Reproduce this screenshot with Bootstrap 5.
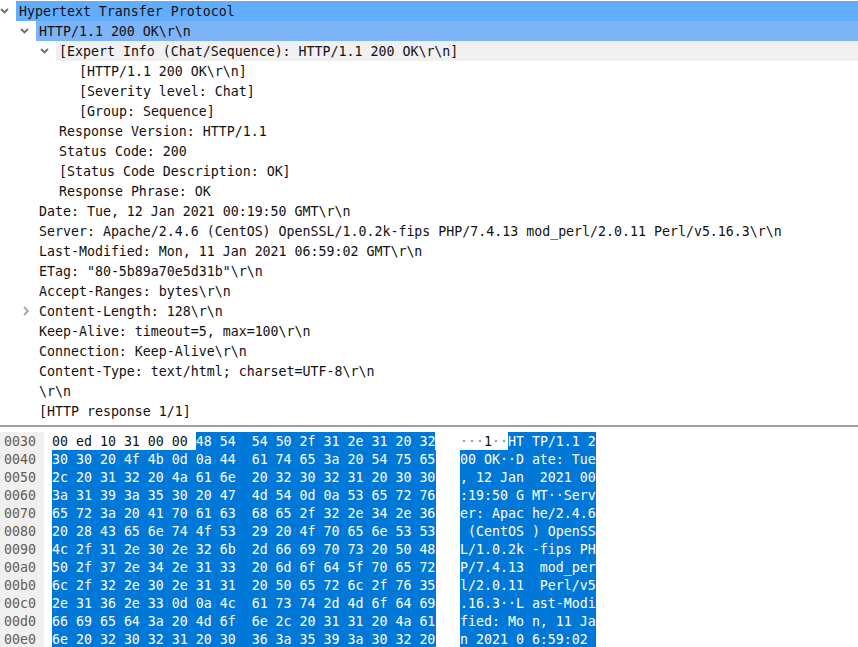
<!doctype html>
<html lang="en">
<head>
<meta charset="utf-8">
<title>Packet details</title>
<link rel="stylesheet" href="https://cdn.jsdelivr.net/npm/bootstrap@5.3.0/dist/css/bootstrap.min.css">
<style>
html,body{height:647px;overflow:hidden;background:#fff}
body{font-family:"DejaVu Sans Mono","Liberation Mono",monospace;font-size:13.28px;color:#111}
.tree-pane{padding-top:1px;height:425px}
.tree-row{height:20px;line-height:22px;white-space:pre}
.gut{flex:none;padding-right:7px}
.g0{width:16px}
.g1{width:36px}
.g2{width:56px}
.g3{width:76px}
.lbl{flex:1 1 auto;padding-left:3px}
.hl-a{background:#63aefc}
.hl-b{background:#7db4f7}
.hl-c{background:#f0f0f0}
.split{height:2px;background:#a0a0a4}
.hex-pane{padding-top:5px}
.hex-row{height:18px;line-height:20px;white-space:pre}
.off{width:44px;background:#f0f0f0;color:#6b5a45;padding-left:4px;flex:none}
.bytes{margin-left:8px;width:384px;flex:none}
.chars{margin-left:24px;width:136px;flex:none}
.sel{background:#0078d7;color:#fff}
.bytes>.sel,.chars>.sel{display:inline-block;height:18px;vertical-align:top}
.dot{color:#8a8a8a}
</style>
</head>
<body>
<div class="tree-pane">
<div class="tree-row d-flex"><div class="gut g0 d-flex justify-content-end align-items-center"><svg width="9" height="6" viewBox="0 0 9 6"><path d="M1 1l3.5 3.5L8 1" fill="none" stroke="#6e6e6e" stroke-width="1.8"/></svg></div><div class="lbl hl-a">Hypertext Transfer Protocol</div></div>
<div class="tree-row d-flex"><div class="gut g1 d-flex justify-content-end align-items-center"><svg width="9" height="6" viewBox="0 0 9 6"><path d="M1 1l3.5 3.5L8 1" fill="none" stroke="#6e6e6e" stroke-width="1.8"/></svg></div><div class="lbl hl-b">HTTP/1.1 200 OK\r\n</div></div>
<div class="tree-row d-flex"><div class="gut g2 d-flex justify-content-end align-items-center"><svg width="9" height="6" viewBox="0 0 9 6"><path d="M1 1l3.5 3.5L8 1" fill="none" stroke="#6e6e6e" stroke-width="1.8"/></svg></div><div class="lbl hl-c">[Expert Info (Chat/Sequence): HTTP/1.1 200 OK\r\n]</div></div>
<div class="tree-row d-flex"><div class="gut g3"></div><div class="lbl">[HTTP/1.1 200 OK\r\n]</div></div>
<div class="tree-row d-flex"><div class="gut g3"></div><div class="lbl">[Severity level: Chat]</div></div>
<div class="tree-row d-flex"><div class="gut g3"></div><div class="lbl">[Group: Sequence]</div></div>
<div class="tree-row d-flex"><div class="gut g2"></div><div class="lbl">Response Version: HTTP/1.1</div></div>
<div class="tree-row d-flex"><div class="gut g2"></div><div class="lbl">Status Code: 200</div></div>
<div class="tree-row d-flex"><div class="gut g2"></div><div class="lbl">[Status Code Description: OK]</div></div>
<div class="tree-row d-flex"><div class="gut g2"></div><div class="lbl">Response Phrase: OK</div></div>
<div class="tree-row d-flex"><div class="gut g1"></div><div class="lbl">Date: Tue, 12 Jan 2021 00:19:50 GMT\r\n</div></div>
<div class="tree-row d-flex"><div class="gut g1"></div><div class="lbl">Server: Apache/2.4.6 (CentOS) OpenSSL/1.0.2k-fips PHP/7.4.13 mod_perl/2.0.11 Perl/v5.16.3\r\n</div></div>
<div class="tree-row d-flex"><div class="gut g1"></div><div class="lbl">Last-Modified: Mon, 11 Jan 2021 06:59:02 GMT\r\n</div></div>
<div class="tree-row d-flex"><div class="gut g1"></div><div class="lbl">ETag: "80-5b89a70e5d31b"\r\n</div></div>
<div class="tree-row d-flex"><div class="gut g1"></div><div class="lbl">Accept-Ranges: bytes\r\n</div></div>
<div class="tree-row d-flex"><div class="gut g1 d-flex justify-content-end align-items-center"><svg width="6" height="10" viewBox="0 0 6 10"><path d="M1 1l4 4-4 4" fill="none" stroke="#a8a8a8" stroke-width="1.8"/></svg></div><div class="lbl">Content-Length: 128\r\n</div></div>
<div class="tree-row d-flex"><div class="gut g1"></div><div class="lbl">Keep-Alive: timeout=5, max=100\r\n</div></div>
<div class="tree-row d-flex"><div class="gut g1"></div><div class="lbl">Connection: Keep-Alive\r\n</div></div>
<div class="tree-row d-flex"><div class="gut g1"></div><div class="lbl">Content-Type: text/html; charset=UTF-8\r\n</div></div>
<div class="tree-row d-flex"><div class="gut g1"></div><div class="lbl">\r\n</div></div>
<div class="tree-row d-flex"><div class="gut g1"></div><div class="lbl">[HTTP response 1/1]</div></div>
</div>
<div class="split"></div>
<div class="hex-pane">
<div class="hex-row d-flex"><div class="off">0030</div><div class="bytes">00 ed 10 31 00 00 <span class="sel">48 54  54 50 2f 31 2e 31 20 32</span></div><div class="chars"><span class="dot">···</span>1<span class="dot">··</span><span class="sel">HT TP/1.1 2</span></div></div>
<div class="hex-row d-flex"><div class="off">0040</div><div class="bytes sel">30 30 20 4f 4b 0d 0a 44  61 74 65 3a 20 54 75 65</div><div class="chars sel">00 OK··D ate: Tue</div></div>
<div class="hex-row d-flex"><div class="off">0050</div><div class="bytes sel">2c 20 31 32 20 4a 61 6e  20 32 30 32 31 20 30 30</div><div class="chars sel">, 12 Jan  2021 00</div></div>
<div class="hex-row d-flex"><div class="off">0060</div><div class="bytes sel">3a 31 39 3a 35 30 20 47  4d 54 0d 0a 53 65 72 76</div><div class="chars sel">:19:50 G MT··Serv</div></div>
<div class="hex-row d-flex"><div class="off">0070</div><div class="bytes sel">65 72 3a 20 41 70 61 63  68 65 2f 32 2e 34 2e 36</div><div class="chars sel">er: Apac he/2.4.6</div></div>
<div class="hex-row d-flex"><div class="off">0080</div><div class="bytes sel">20 28 43 65 6e 74 4f 53  29 20 4f 70 65 6e 53 53</div><div class="chars sel"> (CentOS ) OpenSS</div></div>
<div class="hex-row d-flex"><div class="off">0090</div><div class="bytes sel">4c 2f 31 2e 30 2e 32 6b  2d 66 69 70 73 20 50 48</div><div class="chars sel">L/1.0.2k -fips PH</div></div>
<div class="hex-row d-flex"><div class="off">00a0</div><div class="bytes sel">50 2f 37 2e 34 2e 31 33  20 6d 6f 64 5f 70 65 72</div><div class="chars sel">P/7.4.13  mod_per</div></div>
<div class="hex-row d-flex"><div class="off">00b0</div><div class="bytes sel">6c 2f 32 2e 30 2e 31 31  20 50 65 72 6c 2f 76 35</div><div class="chars sel">l/2.0.11  Perl/v5</div></div>
<div class="hex-row d-flex"><div class="off">00c0</div><div class="bytes sel">2e 31 36 2e 33 0d 0a 4c  61 73 74 2d 4d 6f 64 69</div><div class="chars sel">.16.3··L ast-Modi</div></div>
<div class="hex-row d-flex"><div class="off">00d0</div><div class="bytes sel">66 69 65 64 3a 20 4d 6f  6e 2c 20 31 31 20 4a 61</div><div class="chars sel">fied: Mo n, 11 Ja</div></div>
<div class="hex-row d-flex"><div class="off">00e0</div><div class="bytes sel">6e 20 32 30 32 31 20 30  36 3a 35 39 3a 30 32 20</div><div class="chars sel">n 2021 0 6:59:02 </div></div>
</div>
</body>
</html>
